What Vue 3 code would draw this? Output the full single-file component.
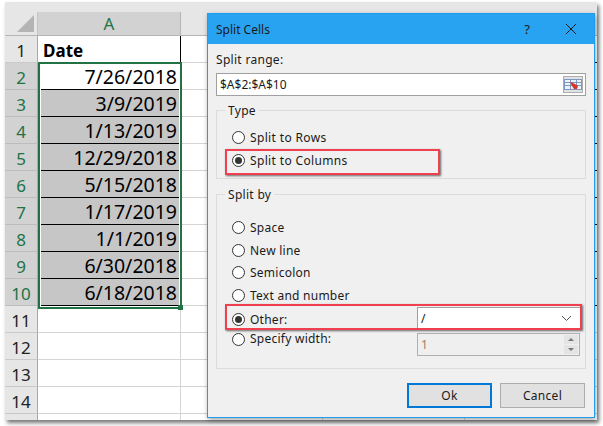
<script setup>
const dates = ['7/26/2018','3/9/2019','1/13/2019','12/29/2018','5/15/2018','1/17/2019','1/1/2019','6/30/2018','6/18/2018']
const emptyRows = [11,12,13,14]
const splitOptions = ['Space','New line','Semicolon','Text and number']
</script>

<template>
  <div class="page">
    <div class="sheet">
      <div class="top-band"></div>
      <div class="row head-row">
        <div class="corner"><span class="tri"></span></div>
        <div class="col-head">A</div>
        <div class="col-rest"></div>
      </div>
      <div class="row">
        <div class="num">1</div>
        <div class="cell date-head">Date</div>
        <div class="cell plain"></div>
        <div class="cell plain"></div>
        <div class="cell plain tick"></div>
      </div>
      <div v-for="(d,i) in dates" :key="d" class="row">
        <div class="num sel">{{ i + 2 }}</div>
        <div class="cell val" :class="{ active: i === 0 }">{{ d }}</div>
        <div class="cell plain"></div>
        <div class="cell plain"></div>
        <div class="cell plain tick"></div>
      </div>
      <div v-for="n in emptyRows" :key="n" class="row">
        <div class="num">{{ n }}</div>
        <div class="cell plain"></div>
        <div class="cell plain"></div>
        <div class="cell plain"></div>
        <div class="cell plain"></div>
      </div>
      <div class="row">
        <div class="num"></div>
        <div class="cell plain"></div>
        <div class="cell plain"></div>
        <div class="cell plain"></div>
        <div class="cell plain"></div>
      </div>
      <div class="selection"><span class="handle"></span></div>
    </div>

    <div class="dialog">
      <div class="title">
        <span class="title-text">Split Cells</span>
        <span class="help">?</span>
        <svg class="close" width="12" height="12" viewBox="0 0 12 12"><path d="M1 1 L11 11 M11 1 L1 11" stroke="#1a1a1a" stroke-width="1" fill="none"/></svg>
      </div>
      <div class="body">
        <div class="range-label">Split range:</div>
        <div class="range-input">
          <span>$A$2:$A$10</span>
          <span class="range-btn">
            <svg width="18" height="13" viewBox="0 0 18 13">
              <rect x="0.5" y="1.5" width="17" height="10" fill="#eef3fa" stroke="#7c97c4" stroke-width="1"/>
              <path d="M0 4.5H18M0 7.5H18M6.5 1V12M12.5 1V12" stroke="#7c97c4" stroke-width="1"/>
              <path d="M6 4 L9 5 L11 6 L14 8 L13 11 L10 11 L8 8 Z" fill="#d8382c"/>
            </svg>
          </span>
        </div>

        <fieldset class="group type-group">
          <legend>Type</legend>
          <div class="opt"><span class="radio"></span><span>Split to Rows</span></div>
          <div class="opt"><span class="radio on"></span><span>Split to Columns</span></div>
          <div class="mark mark-type"></div>
        </fieldset>

        <fieldset class="group by-group">
          <legend>Split by</legend>
          <div v-for="o in splitOptions" :key="o" class="opt by"><span class="radio"></span><span>{{ o }}</span></div>
          <div class="opt by other">
            <span class="radio on"></span><span class="opt-label">Other:</span>
            <div class="combo"><span>/</span>
              <svg width="11" height="7" viewBox="0 0 11 7"><path d="M1 1 L5.5 5.5 L10 1" stroke="#555" fill="none"/></svg>
            </div>
          </div>
          <div class="opt by width">
            <span class="radio"></span><span class="opt-label">Specify width:</span>
            <div class="spin"><span>1</span>
              <div class="spin-btns">
                <span class="spin-btn"><i class="up"></i></span>
                <span class="spin-btn"><i class="down"></i></span>
              </div>
            </div>
          </div>
          <div class="mark mark-other"></div>
        </fieldset>

        <div class="buttons">
          <button class="btn primary">Ok</button>
          <button class="btn">Cancel</button>
        </div>
      </div>
    </div>
  </div>
</template>

<style>
html, body { margin: 0; background: #fff; }
</style>

<style scoped>
.page {
  position: relative;
  width: 603px;
  height: 426px;
  overflow: hidden;
  background: #fff;
  padding: 2px 0 0 5px;
  box-sizing: border-box;
  font-family: "Noto Sans", "Open Sans", sans-serif;
}
.sheet {
  position: relative;
  width: 592px;
  height: 418px;
  overflow: hidden;
  background: #fff;
  box-shadow: 2px 3px 4px #777;
}
.top-band { height: 10px; background: #e6e6e6; }
.row { display: flex; height: 27px; width: 900px; }
.head-row { height: 24px; background: #e6e6e6; border-bottom: 1px solid #b5b5b5; box-sizing: border-box; }
.corner {
  width: 33px; flex: none; box-sizing: border-box; position: relative;
  border-right: 1px solid #c4c4c4;
}
.tri {
  position: absolute; right: 3px; bottom: 3px; width: 0; height: 0;
  border-style: solid; border-width: 0 0 17px 17px;
  border-color: transparent transparent #b4b4b4 transparent;
}
.col-head {
  width: 143px; flex: none; box-sizing: border-box;
  background: #d2d2d2; border-right: 1px solid #b5b5b5;
  text-align: center; color: #217346; font-size: 17px; line-height: 24px;
}
.col-rest { flex: 1; }
.num {
  width: 33px; flex: none; box-sizing: border-box;
  background: #e6e6e6; border-right: 1px solid #a8a8a8; border-bottom: 1px solid #c9c9c9;
  text-align: center; font-size: 17px; line-height: 29px; color: #222;
}
.num.sel { background: #d2d2d2; color: #217346; border-bottom-color: #bdbdbd; }
.cell { flex: none; box-sizing: border-box; height: 27px; }
.plain { width: 142px; border-right: 1px solid #d4d4d4; border-bottom: 1px solid #d4d4d4; }
.tick { border-bottom-color: #000; }
.row > .cell:nth-child(2) { width: 143px; }
.date-head {
  background: #fff; font-weight: 700; font-size: 17px; line-height: 29px;
  padding-left: 5px; color: #000; border-right: 1px solid #000;
}
.val {
  background: #c6c6c6; font-size: 19.5px; line-height: 28px;
  text-align: right; padding-right: 3px; color: #000;
  border-bottom: 1px solid #000; border-right: 1px solid #000;
}
.val.active { background: #fff; }
.selection {
  position: absolute; left: 33px; top: 60px; width: 140px; height: 243px;
  border: 2px solid #217346;
  box-shadow: inset 0 0 0 1px #fff; pointer-events: none;
}
.handle {
  position: absolute; right: -3px; bottom: -3px; width: 5px; height: 5px;
  background: #217346;
}

.dialog {
  position: absolute; left: 207px; top: 13px; width: 388px; height: 405px;
  box-sizing: border-box; background: #f0f0f0; border: 1px solid #1f9cf0;
  font-size: 12px; color: #1a1a1a;
  box-shadow: 1px 2px 5px rgba(0,0,0,.35);
}
.title {
  height: 30px; background: #28a3f2; display: flex; align-items: center;
  padding: 0 17px 0 8px; color: #1a1a1a;
}
.title-text { flex: 1; font-size: 12px; }
.help { font-size: 13px; margin-right: 35px; }
.close { flex: none; }
.body { padding: 7px 8px 0 8px; display: flex; flex-direction: column; }
.range-label { font-size: 12px; line-height: 17px; letter-spacing: .3px; }
.range-input {
  margin-top: 5px; height: 23px; box-sizing: border-box; width: 370px;
  border: 1px solid #a0a0a0; background: #fff; display: flex; align-items: center;
  justify-content: space-between; padding: 0 2px 0 3px; font-size: 12px;
}
.range-btn {
  width: 20px; height: 17px; background: #e2e2e2; border: 1px solid #adadad;
  box-sizing: border-box; display: flex; align-items: center; justify-content: center;
}
.group {
  position: relative; margin: 0; width: 370px; box-sizing: border-box;
  border: 1px solid #dcdcdc; padding: 0 0 0 15px;
}
.group legend { position: relative; top: 1px; padding: 0 3px; margin-left: -7px; font-size: 12px; line-height: 16px; letter-spacing: .3px; }
.type-group { margin-top: 6px; height: 77px; }
.by-group { margin-top: 7px; height: 183px; }
.opt { display: flex; align-items: center; height: 23px; gap: 5px; letter-spacing: .35px; font-size: 12px; }
.type-group .opt:first-of-type { margin-top: 8px; }
.by:first-of-type { margin-top: 14px; }
.by { height: 22.75px; letter-spacing: .25px; }
.other { margin-top: 1px; }
.radio {
  width: 13px; height: 13px; flex: none; box-sizing: border-box; border-radius: 50%;
  border: 1px solid #333; background: #fff; position: relative;
}
.radio.on::after {
  content: ""; position: absolute; left: 2px; top: 2px; width: 7px; height: 7px;
  border-radius: 50%; background: #333;
}
.opt-label { width: 162px; flex: none; }
.other .combo {
  position: relative; z-index: 1;
  width: 164px; height: 23px; box-sizing: border-box; background: #fff; flex: none;
  border: 1px solid #a0a0a0; display: flex; align-items: center;
  justify-content: space-between; padding: 0 8px 0 3px; margin-bottom: 2px;
}
.width { margin-top: -2px; align-items: flex-start; }
.width .radio { margin-top: 4px; }
.width .opt-label { margin-top: 1px; }
.spin {
  width: 163px; height: 23px; box-sizing: border-box; flex: none; margin-top: 4px;
  border: 1px solid #b0b0b0; background: #efefef; display: flex; justify-content: space-between;
  align-items: center; padding: 0 1px 0 3px; color: #a08060;
}
.spin-btns { display: flex; flex-direction: column; gap: 1px; }
.spin-btn { width: 14px; height: 9px; background: #e4e4e4; display: flex; align-items: center; justify-content: center; }
.spin-btn i { width: 0; height: 0; border-left: 3px solid transparent; border-right: 3px solid transparent; }
.spin-btn .up { border-bottom: 3px solid #777; }
.spin-btn .down { border-top: 3px solid #777; }
.mark {
  position: absolute; border: 2px solid #f0404f; box-sizing: border-box;
  box-shadow: 1px 1px 2px #666; pointer-events: none; z-index: 2;
}
.mark-type { left: 8px; top: 31px; width: 215px; height: 26px; }
.mark-other { left: 8px; top: 102px; width: 357px; height: 26px; }
.buttons { display: flex; justify-content: flex-end; gap: 8px; margin-top: 14px; padding-right: 1px; }
.btn {
  width: 85px; height: 25px; box-sizing: border-box; background: #e1e1e1;
  border: 1px solid #adadad; font: inherit; color: #1a1a1a; padding: 0; letter-spacing: .3px;
}
.btn.primary { border: 2px solid #0078d7; }
</style>
